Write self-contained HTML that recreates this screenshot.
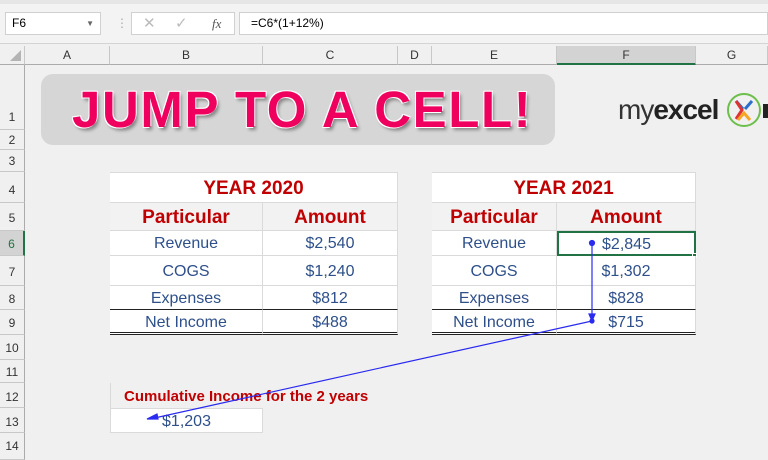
<!DOCTYPE html><html><head><style>
*{margin:0;padding:0;box-sizing:border-box}
body{width:768px;height:460px;overflow:hidden;background:#f0f0f0;font-family:"Liberation Sans",sans-serif;position:relative}
.a{position:absolute}
.ch{position:absolute;top:46px;height:19px;border-right:1px solid #c8c8c8;border-bottom:1px solid #ababab;font-size:12px;color:#333;text-align:center;line-height:19px;background:#f0f0f0}
.rh{position:absolute;left:0;width:25px;border-bottom:1px solid #c8c8c8;border-right:1px solid #ababab;font-size:12px;color:#333;text-align:center;background:#f0f0f0}
.c{position:absolute;background:#fff;border-right:1px solid #dadada;border-bottom:1px solid #dadada;text-align:center;font-size:16px;color:#2e4f8a}
.h{color:#c00000;font-weight:bold;font-size:19px}
</style></head><body>
<div class="a" style="left:0;top:0;width:768px;height:44px;background:#f3f3f3;border-bottom:1px solid #d4d4d4"></div>
<div class="a" style="left:0;top:0;width:768px;height:4px;background:#e6e6e6"></div>
<div class="a" style="left:5px;top:12px;width:96px;height:23px;background:#fff;border:1px solid #d0d0d0;font-size:12px;line-height:21px;padding-left:6px">F6<span style="position:absolute;right:6px;top:0;font-size:8px;color:#666">▼</span></div>
<div class="a" style="left:116px;top:16px;color:#aaa;font-size:12px">⋮</div>
<div class="a" style="left:131px;top:12px;width:104px;height:23px;background:#fff;border:1px solid #d0d0d0;color:#bbb;font-size:15px;line-height:21px"><span style="position:absolute;left:11px">✕</span><span style="position:absolute;left:43px">✓</span><span style="position:absolute;left:80px;color:#555;font-family:'Liberation Serif';font-style:italic;font-size:13px">fx</span></div>
<div class="a" style="left:239px;top:12px;width:529px;height:23px;background:#fff;border:1px solid #d0d0d0;font-size:12px;line-height:21px;padding-left:11px">=C6*(1+12%)</div>
<div class="ch" style="left:0;width:25px"></div>
<svg class="a" style="left:8px;top:50px" width="14" height="12"><polygon points="13,0 13,11 2,11" fill="#b4b4b4"/></svg>
<div class="ch" style="left:25px;width:85px">A</div>
<div class="ch" style="left:110px;width:153px">B</div>
<div class="ch" style="left:263px;width:135px">C</div>
<div class="ch" style="left:398px;width:34px">D</div>
<div class="ch" style="left:432px;width:125px">E</div>
<div class="ch" style="left:557px;width:139px;background:#d3d3d3;border-bottom:2px solid #217346">F</div>
<div class="ch" style="left:696px;width:72px">G</div>
<div class="rh" style="top:65px;height:65px;line-height:104px">1</div>
<div class="rh" style="top:130px;height:20px;line-height:20px">2</div>
<div class="rh" style="top:150px;height:22px;line-height:22px">3</div>
<div class="rh" style="top:172px;height:31px;line-height:36px">4</div>
<div class="rh" style="top:203px;height:28px;line-height:30px">5</div>
<div class="rh" style="top:231px;height:25px;line-height:27px;background:#d3d3d3;border-right:2px solid #217346;color:#217346">6</div>
<div class="rh" style="top:256px;height:30px;line-height:32px">7</div>
<div class="rh" style="top:286px;height:24px;line-height:26px">8</div>
<div class="rh" style="top:310px;height:25px;line-height:26px">9</div>
<div class="rh" style="top:335px;height:25px;line-height:26px">10</div>
<div class="rh" style="top:360px;height:23px;line-height:24px">11</div>
<div class="rh" style="top:383px;height:25px;line-height:28px">12</div>
<div class="rh" style="top:408px;height:25px;line-height:28px">13</div>
<div class="rh" style="top:433px;height:27px;line-height:26px">14</div>
<div class="a" style="left:41px;top:74px;width:514px;height:71px;background:#d6d6d6;border-radius:12px"></div>
<div class="a" style="left:72px;top:80px;font-size:51px;font-weight:bold;color:#f0005e;letter-spacing:1.6px;text-shadow:-1px -1px 0 #fff,1px -1px 0 #fff,-1px 1px 0 #fff,2px 3px 3px #888">JUMP TO A CELL!</div>
<div class="a" style="left:618px;top:94px;font-size:28px;color:#333;letter-spacing:-1px"><span style="font-weight:300">my</span><b style="color:#222">excel</b></div>
<svg class="a" style="left:724px;top:91px" width="44" height="40"><circle cx="20" cy="19" r="16" fill="none" stroke="#6cbf4a" stroke-width="2"/><path d="M12 10l7 8M28 10l-7 8" stroke="#2b6fce" stroke-width="3"/><path d="M12 10l6 9-6 9" stroke="#d33" stroke-width="3" fill="none"/><path d="M14 29l6-7 6 7" stroke="#f5a623" stroke-width="3" fill="none"/><rect x="39" y="13" width="5" height="14" fill="#222"/></svg>
<div class="c h" style="left:110px;top:172px;width:288px;height:31px;line-height:32px;border-top:1px solid #dadada">YEAR 2020</div>
<div class="c h" style="left:110px;top:203px;width:153px;height:28px;line-height:30px;background:#f2f2f2">Particular</div>
<div class="c h" style="left:263px;top:203px;width:135px;height:28px;line-height:30px;background:#f2f2f2">Amount</div>
<div class="c" style="left:110px;top:231px;width:153px;height:25px;line-height:26px">Revenue</div>
<div class="c" style="left:263px;top:231px;width:135px;height:25px;line-height:26px">$2,540</div>
<div class="c" style="left:110px;top:256px;width:153px;height:30px;line-height:31px">COGS</div>
<div class="c" style="left:263px;top:256px;width:135px;height:30px;line-height:31px">$1,240</div>
<div class="c" style="left:110px;top:286px;width:153px;height:24px;line-height:25px;border-bottom:1px solid #222">Expenses</div>
<div class="c" style="left:263px;top:286px;width:135px;height:24px;line-height:25px;border-bottom:1px solid #222">$812</div>
<div class="c" style="left:110px;top:310px;width:153px;height:25px;line-height:25px;border-bottom:3px double #222">Net Income</div>
<div class="c" style="left:263px;top:310px;width:135px;height:25px;line-height:25px;border-bottom:3px double #222">$488</div>

<div class="c h" style="left:432px;top:172px;width:264px;height:31px;line-height:32px;border-top:1px solid #dadada">YEAR 2021</div>
<div class="c h" style="left:432px;top:203px;width:125px;height:28px;line-height:30px;background:#f2f2f2">Particular</div>
<div class="c h" style="left:557px;top:203px;width:139px;height:28px;line-height:30px;background:#f2f2f2">Amount</div>
<div class="c" style="left:432px;top:231px;width:125px;height:25px;line-height:26px">Revenue</div>
<div class="c" style="left:557px;top:231px;width:139px;height:25px;line-height:24px;border:2px solid #217346">$2,845</div>
<div class="a" style="left:692px;top:253px;width:5px;height:5px;background:#217346;border:1px solid #fff"></div>
<div class="c" style="left:432px;top:256px;width:125px;height:30px;line-height:31px">COGS</div>
<div class="c" style="left:557px;top:256px;width:139px;height:30px;line-height:31px">$1,302</div>
<div class="c" style="left:432px;top:286px;width:125px;height:24px;line-height:25px;border-bottom:1px solid #222">Expenses</div>
<div class="c" style="left:557px;top:286px;width:139px;height:24px;line-height:25px;border-bottom:1px solid #222">$828</div>
<div class="c" style="left:432px;top:310px;width:125px;height:25px;line-height:25px;border-bottom:3px double #222">Net Income</div>
<div class="c" style="left:557px;top:310px;width:139px;height:25px;line-height:25px;border-bottom:3px double #222">$715</div>

<div class="a" style="left:110px;top:383px;width:1px;height:25px;background:#dadada"></div>
<div class="a" style="left:124px;top:388px;font-size:15px;font-weight:bold;color:#c00000">Cumulative Income for the 2 years</div>
<div class="c" style="left:110px;top:408px;width:153px;height:25px;line-height:26px;border-top:1px solid #dadada;border-left:1px solid #dadada">$1,203</div>
<svg class="a" style="left:0;top:0" width="768" height="460"><g stroke="#2a2af0" stroke-width="1.2" fill="#2a2af0"><circle cx="592" cy="243" r="2.5"/><line x1="592" y1="243" x2="592" y2="321"/><polygon points="589,314 595,314 592,321"/><circle cx="592" cy="321" r="2"/><line x1="592" y1="321" x2="150" y2="419"/><polygon points="147,419 157,414 158,419"/></g></svg>
</body></html>
